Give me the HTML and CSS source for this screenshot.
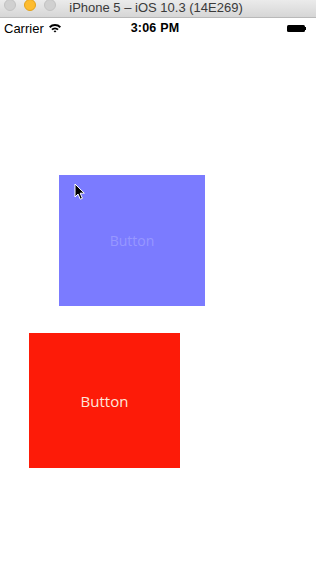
FILE: index.html
```html
<!DOCTYPE html>
<html lang="en">

<head>
    <meta charset="UTF-8">
    <meta name="viewport" content="width=device-width, initial-scale=1.0">
    <title>iPhone 5 - iOS 10.3</title>
    <link rel="stylesheet" href="styles.css">
</head>

<body>

    <div class="window-bar">
        <div class="lights">
            <span class="light"></span>
            <span class="light yellow"></span>
            <span class="light"></span>
        </div>
        <div class="window-title">iPhone 5 – iOS 10.3 (14E269)</div>
    </div>

    <div class="status-bar">
        <div class="carrier">
            Carrier
            <svg class="wifi" viewBox="0 0 14 10" width="14" height="10">
                <path d="M1 3.6 A8.5 8.5 0 0 1 13 3.6 L11.6 5 A6.5 6.5 0 0 0 2.4 5 Z" fill="#000"/>
                <path d="M3.3 5.9 A5.3 5.3 0 0 1 10.7 5.9 L9.3 7.3 A3.3 3.3 0 0 0 4.7 7.3 Z" fill="#000"/>
                <path d="M5.6 8.2 A2 2 0 0 1 8.4 8.2 L7 9.6 Z" fill="#000"/>
            </svg>
        </div>
        <div class="clock">3:06 PM</div>
        <div class="battery">
            <span class="battery-body"></span>
            <span class="battery-tip"></span>
        </div>
    </div>

    <div class="screen">
        <button class="btn btn-blue">Button</button>
        <button class="btn btn-red">Button</button>

        <!-- mouse pointer captured in the recording -->
        <svg class="pointer" viewBox="0 0 12 18" width="12" height="18">
            <path d="M1 1 L1 14 L4 11 L6.3 16.2 L8.4 15.3 L6.2 10.2 L10.3 10.2 Z" fill="#000" stroke="#fff" stroke-width="1"/>
        </svg>
    </div>

</body>

</html>
```

FILE: styles.css
```css
body {
    margin: 0;
    background-color: #fff;
    font-family: "Liberation Sans", Arial, sans-serif;
    width: 316px;
    height: 586px;
    overflow: hidden;
}

.window-bar {
    position: relative;
    height: 18px;
    background: linear-gradient(#ebebeb, #d6d6d6);
    border-bottom: 1px solid #b9b9b9;
    box-sizing: border-box;
    overflow: hidden;
}

.lights {
    display: flex;
    gap: 8px;
    padding-left: 4px;
    transform: translateY(-1px);
}

.light {
    width: 12px;
    height: 12px;
    border-radius: 50%;
    background-color: #d0d0d0;
    border: 1px solid #c2c2c2;
    box-sizing: border-box;
}

.light.yellow {
    background-color: #fdbc30;
    border-color: #e3a21a;
}

.window-title {
    position: absolute;
    top: 0;
    left: 0;
    right: 0;
    text-align: center;
    font-size: 13px;
    line-height: 16px;
    color: #3a3a3a;
    padding-right: 4px;
}

.status-bar {
    display: flex;
    align-items: center;
    justify-content: space-between;
    height: 20px;
    padding: 0 10px 0 4px;
    font-size: 13px;
    color: #000;
}

.carrier {
    display: flex;
    align-items: center;
    gap: 4px;
    width: 90px;
}

.wifi {
    margin-top: -1px;
}

.clock {
    font-weight: bold;
    font-size: 12.5px;
    letter-spacing: 0.2px;
}

.battery {
    display: flex;
    align-items: center;
    justify-content: flex-end;
    width: 90px;
}

.battery-body {
    width: 18px;
    height: 7px;
    background-color: #000;
    border-radius: 1.5px;
}

.battery-tip {
    width: 1.5px;
    height: 3px;
    background-color: #000;
}

.screen {
    position: relative;
    display: flex;
    flex-direction: column;
    align-items: flex-start;
    padding-top: 137px;
}

.btn {
    border: none;
    padding: 0;
    font-family: "Open Sans", "Liberation Sans", sans-serif;
    font-size: 14px;
}

.btn-blue {
    width: 146px;
    height: 131px;
    margin-left: 59px;
    background-color: #7b7bff;
    color: #9797ff;
}

.btn-red {
    width: 151px;
    height: 135px;
    margin-left: 29px;
    margin-top: 27px;
    background-color: #fd1b08;
    color: #fde6da;
    font-size: 15px;
}

.pointer {
    position: absolute;
    top: 145px;
    left: 74px;
}
```
